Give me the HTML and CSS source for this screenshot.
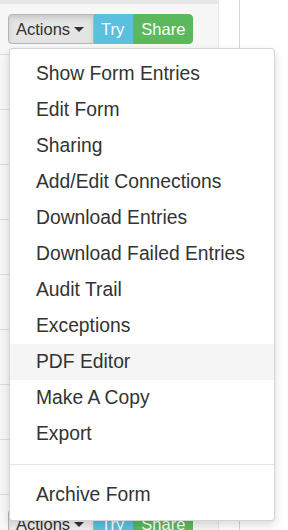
FILE: index.html
```html
<!DOCTYPE html>
<html>
<head>
<meta charset="utf-8">
<link rel="stylesheet" href="styles.css">
</head>
<body>
<div class="table">
  <div class="row first">
    <div class="cell main">
      <div class="btn-group">
        <button class="btn btn-default">Actions <span class="caret"></span></button>
        <button class="btn btn-info">Try</button>
        <button class="btn btn-success">Share</button>
        <ul class="dropdown-menu">
          <li><a>Show Form Entries</a></li>
          <li><a>Edit Form</a></li>
          <li><a>Sharing</a></li>
          <li><a>Add/Edit Connections</a></li>
          <li><a>Download Entries</a></li>
          <li><a>Download Failed Entries</a></li>
          <li><a>Audit Trail</a></li>
          <li><a>Exceptions</a></li>
          <li class="hover"><a>PDF Editor</a></li>
          <li><a>Make A Copy</a></li>
          <li><a>Export</a></li>
          <li class="divider"></li>
          <li><a>Archive Form</a></li>
        </ul>
      </div>
    </div>
    <div class="cell mid"></div>
    <div class="cell rest"></div>
  </div>
  <div class="row"><div class="cell main"></div><div class="cell mid"></div><div class="cell rest"></div></div>
  <div class="row"><div class="cell main"></div><div class="cell mid"></div><div class="cell rest"></div></div>
  <div class="row"><div class="cell main"></div><div class="cell mid"></div><div class="cell rest"></div></div>
  <div class="row"><div class="cell main"></div><div class="cell mid"></div><div class="cell rest"></div></div>
  <div class="row"><div class="cell main"></div><div class="cell mid"></div><div class="cell rest"></div></div>
  <div class="row"><div class="cell main"></div><div class="cell mid"></div><div class="cell rest"></div></div>
  <div class="row"><div class="cell main"></div><div class="cell mid"></div><div class="cell rest"></div></div>
  <div class="row"><div class="cell main"></div><div class="cell mid"></div><div class="cell rest"></div></div>
  <div class="row">
    <div class="cell main">
      <div class="btn-group">
        <button class="btn btn-default plain">Actions <span class="caret"></span></button>
        <button class="btn btn-info">Try</button>
        <button class="btn btn-success">Share</button>
      </div>
    </div>
    <div class="cell mid"></div>
    <div class="cell rest"></div>
  </div>
</div>
</body>
</html>
```

FILE: styles.css
```css
html, body {
  margin: 0;
  padding: 0;
  background: #fff;
  font-family: "Liberation Sans", Arial, sans-serif;
  color: #333;
  overflow: hidden;
}
.table {
  display: flex;
  flex-direction: column;
  width: 288px;
}
.row {
  display: grid;
  grid-template-columns: 219px 21px 1fr;
  height: 55px;
  flex: none;
}
.cell {
  box-sizing: border-box;
}
.cell.main {
  background: #f7f7f7;
  border-bottom: 1px solid #dcdcdc;
  border-right: 1px solid #e6e6e6;
  padding: 14px 0 0 8px;
}
.row.first .cell.main {
  border-top: 4px solid #e6e6e6;
  padding-top: 10px;
}
.cell.mid {
  border-right: 1px solid #d6d6d6;
}
.btn-group {
  position: relative;
  display: inline-flex;
}
.btn {
  font-family: "Liberation Sans", Arial, sans-serif;
  font-size: 16.5px;
  line-height: 22px;
  height: 30px;
  box-sizing: border-box;
  padding: 3px 7px;
  border: 1px solid transparent;
  margin: 0;
  color: #fff;
}
.btn-default {
  color: #333;
  background: #e4e4e4;
  border-color: #b5b5b5;
  border-radius: 4px 0 0 4px;
  box-shadow: inset 0 3px 5px rgba(0, 0, 0, 0.12);
  padding: 3px 9px 3px 7px;
  display: inline-flex;
  align-items: center;
}
.btn-default.plain {
  background: #f0f0f0;
}
.btn-info {
  background: #5bc0de;
  border-color: #5bc0de;
  padding: 3px 8px 3px 6px;
}
.btn-success {
  background: #5cb85c;
  border-color: #5cb85c;
  border-radius: 0 4px 4px 0;
  padding: 3px 7px 3px 7px;
}
.caret {
  display: inline-block;
  width: 0;
  height: 0;
  margin-left: 4px;
  border-top: 5px solid #333;
  border-left: 5px solid transparent;
  border-right: 5px solid transparent;
}
.dropdown-menu {
  position: absolute;
  top: 34px;
  left: 1px;
  z-index: 10;
  width: 266px;
  box-sizing: border-box;
  margin: 0;
  padding: 7px 0;
  list-style: none;
  background: #fff;
  border: 1px solid rgba(0, 0, 0, 0.17);
  border-radius: 4px;
  box-shadow: 0 4px 10px rgba(0, 0, 0, 0.15);
}
.dropdown-menu li a {
  display: block;
  height: 36px;
  line-height: 36px;
  padding: 0 0 0 26px;
  font-size: 19.3px;
  color: #333;
  white-space: nowrap;
}
.dropdown-menu li.hover a {
  background: #f5f5f5;
}
.dropdown-menu li.divider {
  height: 1px;
  margin: 12px 0 12px;
  background: #e5e5e5;
}
```
